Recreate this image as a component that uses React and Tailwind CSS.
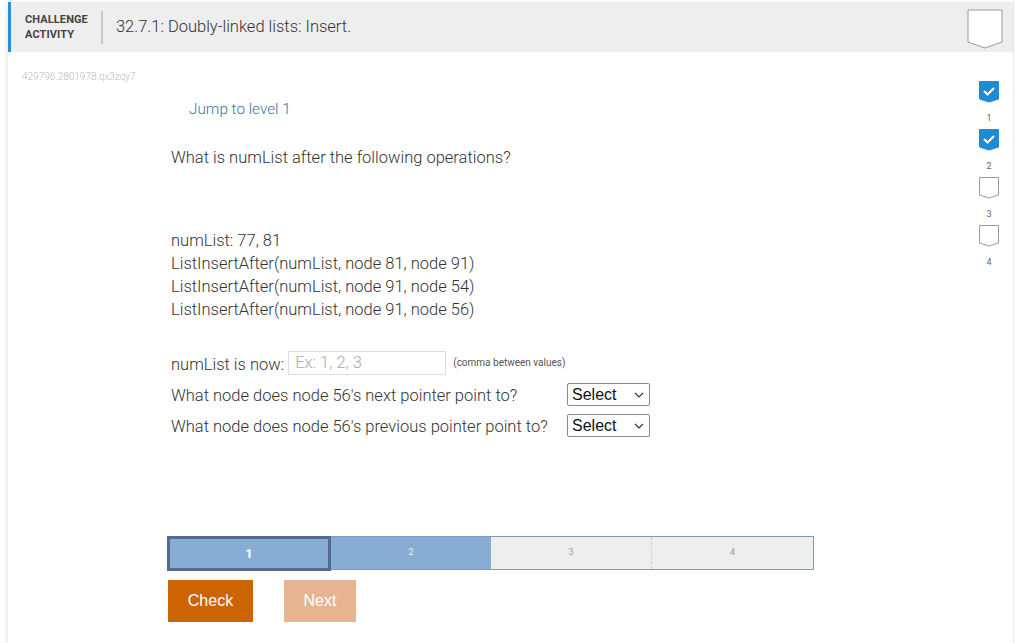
import React from "react";

function Badge({ filled, size = "sm" }) {
  if (size === "lg") {
    return (
      <svg width="36" height="40" viewBox="0 0 36 40">
        <path d="M1 1 H35 V33 L18 39 L1 33 Z" fill="#fff" stroke="#9a9a9a" strokeWidth="1" />
      </svg>
    );
  }
  return (
    <svg width="20" height="22" viewBox="0 0 20 22">
      {filled ? (
        <>
          <path d="M0.5 0.5 H19.5 V18 L10 21 L0.5 18 Z" fill="#1f8ad6" stroke="#1f8ad6" />
          <path d="M5 10 L8.5 13.5 L15 7" fill="none" stroke="#fff" strokeWidth="2" />
        </>
      ) : (
        <path d="M0.5 0.5 H19.5 V18 L10 21 L0.5 18 Z" fill="#fff" stroke="#9a9a9a" strokeWidth="1" />
      )}
    </svg>
  );
}

function SelectBox() {
  return (
    <div
      className="flex items-center justify-between w-[83px] h-[23px] border border-[#8a8a8a] rounded-[2px] bg-white pl-[4px] pr-[5px] text-[16px] leading-[20px] text-[#111]"
      style={{ fontFamily: "'Liberation Sans', Arial, sans-serif" }}
    >
      <span>Select</span>
      <svg width="10" height="6" viewBox="0 0 10 6"><path d="M1 1 L5 5 L9 1" fill="none" stroke="#333" strokeWidth="1.2" /></svg>
    </div>
  );
}

export default function App() {
  const font = { fontFamily: "Roboto, 'Liberation Sans', sans-serif" };
  const arial = { fontFamily: "'Liberation Sans', Arial, sans-serif" };
  return (
    <div className="w-[1024px] h-[643px] bg-white overflow-hidden" style={font}>
      <div className="ml-[8px] mr-[10px] mt-[2px] h-[641px] bg-white shadow-[-2px_0_3px_rgba(0,0,0,0.08)] border-r border-[#e6e6e6] flex flex-col">
        {/* header */}
        <div className="h-[50px] bg-[#eeeeee] border-l-[3px] border-[#2a8fd6] flex items-center shrink-0">
          <div className="pl-[14px] pr-[13px] text-[11px] leading-[15px] font-bold text-[#444] tracking-[0.1px]">
            <div>CHALLENGE</div>
            <div>ACTIVITY</div>
          </div>
          <div className="w-[2px] h-[33px] bg-[#c8c8c8]" />
          <div className="pl-[13px] text-[16.5px] leading-[20px] font-light text-[#333] flex-1">32.7.1: Doubly-linked lists: Insert.</div>
          <div className="mr-[10px] mt-[4px]"><Badge size="lg" /></div>
        </div>
        {/* body */}
        <div className="flex flex-1">
          <div className="flex-1 relative font-light">
            <div className="pl-[14px] pt-[20px] text-[10px] text-[#bbbbbb] leading-[10px]">429796.2801978.qx3zqy7</div>
            <div className="pl-[181px] pt-[17px] text-[15.3px] text-[#3d6fa8] leading-[20px]">Jump to level 1</div>
            <div className="pl-[163px] pt-[29px] text-[16.5px] text-[#333] leading-[20px]">What is numList after the following operations?</div>
            <div className="pl-[163px] pt-[61px] text-[16.5px] text-[#333] leading-[23px]">
              <div>numList: 77, 81</div>
              <div>ListInsertAfter(numList, node 81, node 91)</div>
              <div>ListInsertAfter(numList, node 91, node 54)</div>
              <div>ListInsertAfter(numList, node 91, node 56)</div>
            </div>
            <div className="pl-[163px] pt-[30px] flex items-center text-[16.5px] leading-[20px] text-[#333]">
              <span className="mt-[3px]">numList is now:</span>
              <div className="ml-[4px] w-[158px] h-[24px] border border-[#dddddd] flex items-center pl-[6px] text-[16.5px] text-[#aaaaaa]">Ex: 1, 2, 3</div>
              <span className="ml-[7px] text-[10px] text-[#555] font-normal">(comma between values)</span>
            </div>
            <div className="pl-[163px] pt-[8px] flex items-center text-[16.5px] leading-[20px] text-[#333]">
              <span className="w-[396px] mt-[3px]">What node does node 56's next pointer point to?</span>
              <SelectBox />
            </div>
            <div className="pl-[163px] pt-[8px] flex items-center text-[16.5px] leading-[20px] text-[#333]">
              <span className="w-[396px] mt-[3px]">What node does node 56's previous pointer point to?</span>
              <SelectBox />
            </div>
            {/* progress */}
            <div className="ml-[159px] mt-[99px] w-[647px] h-[34px] flex border border-[#7f9abd] bg-[#eeeeee] font-normal">
              <div className="w-[164px] -mt-[1px] -ml-[1px] h-[35px] bg-[#89acd4] border-[3px] border-[#566c8f] flex items-center justify-center text-white text-[13px] font-bold">1</div>
              <div className="w-[160px] bg-[#89acd4] flex items-center justify-center text-[#e8eef6] text-[9px]">2</div>
              <div className="w-[161px] border-r border-dashed border-[#c8d2e0] flex items-center justify-center text-[#999] text-[9px]">3</div>
              <div className="flex-1 flex items-center justify-center text-[#999] text-[9px]">4</div>
            </div>
            <div className="ml-[160px] mt-[10px] flex gap-[31px] font-normal" style={arial}>
              <div className="w-[85px] h-[42px] bg-[#cc6404] text-white text-[16px] flex items-center justify-center">Check</div>
              <div className="w-[72px] h-[42px] bg-[#e6b491] text-white text-[16px] flex items-center justify-center">Next</div>
            </div>
          </div>
          <div className="w-[44px] shrink-0 pt-[29px] flex flex-col items-center">
            {[true, true, false, false].map((f, i) => (
              <div key={i} className="flex flex-col items-center h-[48px] -ml-[4px]">
                <Badge filled={f} />
                <div className="text-[9px] text-[#666] mt-[10px] leading-[10px]">{i + 1}</div>
              </div>
            ))}
          </div>
        </div>
      </div>
    </div>
  );
}
